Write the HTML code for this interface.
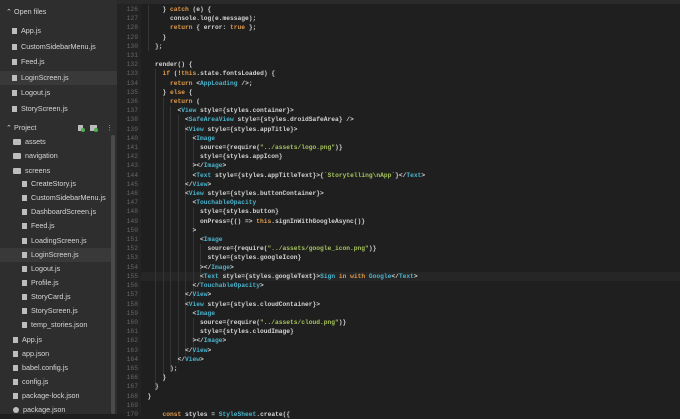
<!DOCTYPE html>
<html><head><meta charset="utf-8"><style>
*{margin:0;padding:0;box-sizing:border-box}
body{width:680px;height:414px;overflow:hidden;background:#1f1f1f;position:relative;font-family:"Liberation Sans",sans-serif}
#side{position:absolute;left:0;top:0;width:117px;height:414px;background:#2e2e2e}
.r{position:absolute;left:0;width:111px;height:14px;font-size:7.2px;color:#d6d6d6;line-height:14px;white-space:nowrap}
.r.sel{background:#393939}
.fi{display:inline-block;width:5px;height:6px;background:#bdbdbd;margin-right:4px;vertical-align:-1px}
.fo{display:inline-block;width:8px;height:6px;background:#bdbdbd;margin-right:4px;vertical-align:-1px;border-radius:1px}
.h{font-size:7.2px;color:#d6d6d6}
#sb{position:absolute;left:111px;top:135px;width:4px;height:279px;background:#4a4a4a;border-radius:2px}
#gut{position:absolute;left:117px;top:0;width:24px;height:414px;background:#232323}
#top{position:absolute;left:117px;top:0;width:563px;height:4px;background:#2a2a2a}
.n{position:absolute;left:117px;width:21px;text-align:right;font-family:"Liberation Mono",monospace;font-size:6.3px;color:#666;line-height:9.2px}
.c{position:absolute;left:147.5px;font-family:"Liberation Mono",monospace;font-size:6.25px;font-weight:bold;color:#d4d4d4;line-height:9.2px;white-space:pre}
.k{color:#e09a4a}.t{color:#4ab3cc}.s{color:#a5c25c}
#hl{position:absolute;left:141px;top:271.8px;width:539px;height:9.2px;background:#262626}
.g{position:absolute;width:1px;background:#353535}
</style></head><body>
<div id="side">
<div class="r" style="top:5px;padding-left:6px"><span class="h">⌃ Open files</span></div>
<div class="r" style="top:24px;padding-left:12px"><span class="fi"></span>App.js</div>
<div class="r" style="top:40px;padding-left:12px"><span class="fi"></span>CustomSidebarMenu.js</div>
<div class="r" style="top:55px;padding-left:12px"><span class="fi"></span>Feed.js</div>
<div class="r sel" style="top:71px;padding-left:12px;width:117px"><span class="fi"></span>LoginScreen.js</div>
<div class="r" style="top:86px;padding-left:12px"><span class="fi"></span>Logout.js</div>
<div class="r" style="top:102px;padding-left:12px"><span class="fi"></span>StoryScreen.js</div>
<div class="r" style="top:121px;padding-left:6px"><span class="h">⌃ Project</span>
<span style="position:absolute;left:78px;top:4px;width:5px;height:6px;background:#bbb"></span><span style="position:absolute;left:81px;top:7px;width:4px;height:4px;background:#4caf50;border-radius:2px"></span>
<span style="position:absolute;left:90px;top:4px;width:7px;height:6px;background:#bbb"></span><span style="position:absolute;left:94px;top:7px;width:4px;height:4px;background:#4caf50;border-radius:2px"></span>
<span style="position:absolute;left:106px;top:0;color:#aaa">⋮</span></div>
<div class="r" style="top:135px;padding-left:13px"><span class="fo"></span>assets</div>
<div class="r" style="top:149px;padding-left:13px"><span class="fo"></span>navigation</div>
<div class="r" style="top:164px;padding-left:13px"><span class="fo"></span>screens</div>
<div class="r" style="top:177px;padding-left:22px"><span class="fi"></span>CreateStory.js</div>
<div class="r" style="top:191px;padding-left:22px"><span class="fi"></span>CustomSidebarMenu.js</div>
<div class="r" style="top:205px;padding-left:22px"><span class="fi"></span>DashboardScreen.js</div>
<div class="r" style="top:219px;padding-left:22px"><span class="fi"></span>Feed.js</div>
<div class="r" style="top:234px;padding-left:22px"><span class="fi"></span>LoadingScreen.js</div>
<div class="r sel" style="top:248px;padding-left:22px"><span class="fi"></span>LoginScreen.js</div>
<div class="r" style="top:262px;padding-left:22px"><span class="fi"></span>Logout.js</div>
<div class="r" style="top:276px;padding-left:22px"><span class="fi"></span>Profile.js</div>
<div class="r" style="top:290px;padding-left:22px"><span class="fi"></span>StoryCard.js</div>
<div class="r" style="top:304px;padding-left:22px"><span class="fi"></span>StoryScreen.js</div>
<div class="r" style="top:318px;padding-left:22px"><span class="fi"></span>temp_stories.json</div>
<div class="r" style="top:333px;padding-left:13px"><span class="fi"></span>App.js</div>
<div class="r" style="top:347px;padding-left:13px"><span class="fi"></span>app.json</div>
<div class="r" style="top:361px;padding-left:13px"><span class="fi"></span>babel.config.js</div>
<div class="r" style="top:375px;padding-left:13px"><span class="fi"></span>config.js</div>
<div class="r" style="top:389px;padding-left:13px"><span class="fi"></span>package-lock.json</div>
<div class="r" style="top:403px;padding-left:13px"><span class="fi" style="border-radius:3px;width:6px"></span>package.json</div>
<div id="sb"></div>
</div>
<div id="gut"></div>
<div id="top"></div>
<div id="hl"></div>
<div class="g" style="left:147.5px;top:5px;height:46px"></div>
<div class="g" style="left:155px;top:69.4px;height:322px"></div>
<div class="g" style="left:162.5px;top:97px;height:285px"></div>
<div class="g" style="left:170px;top:106.2px;height:266px"></div>
<div class="g" style="left:177.5px;top:115.4px;height:248px"></div>
<div class="g" style="left:185px;top:124.6px;height:230px"></div>
<div class="g" style="left:192.5px;top:133.8px;height:37px"></div>
<div class="g" style="left:192.5px;top:207.4px;height:92px"></div>
<div class="g" style="left:192.5px;top:317.8px;height:37px"></div>
<div class="g" style="left:200px;top:244.2px;height:37px"></div>
<div class="n" style="top:5px">126<br>127<br>128<br>129<br>130<br>131<br>132<br>133<br>134<br>135<br>136<br>137<br>138<br>139<br>140<br>141<br>142<br>143<br>144<br>145<br>146<br>147<br>148<br>149<br>150<br>151<br>152<br>153<br>154<br>155<br>156<br>157<br>158<br>159<br>160<br>161<br>162<br>163<br>164<br>165<br>166<br>167<br>168<br>169<br>170</div>
<div class="c" style="top:5px">    } <span class="k">catch</span> (e) {
      console.log(e.message);
      <span class="k">return</span> { error: <span class="k">true</span> };
    }
  };

  render() {
    <span class="k">if</span> (!<span class="k">this</span>.state.fontsLoaded) {
      <span class="k">return</span> &lt;<span class="t">AppLoading</span> /&gt;;
    } <span class="k">else</span> {
      <span class="k">return</span> (
        &lt;<span class="t">View</span> style={styles.container}&gt;
          &lt;<span class="t">SafeAreaView</span> style={styles.droidSafeArea} /&gt;
          &lt;<span class="t">View</span> style={styles.appTitle}&gt;
            &lt;<span class="t">Image</span>
              source={require(<span class="s">"../assets/logo.png"</span>)}
              style={styles.appIcon}
            &gt;&lt;/<span class="t">Image</span>&gt;
            &lt;<span class="t">Text</span> style={styles.appTitleText}&gt;{<span class="s">`Storytelling\nApp`</span>}&lt;/<span class="t">Text</span>&gt;
          &lt;/<span class="t">View</span>&gt;
          &lt;<span class="t">View</span> style={styles.buttonContainer}&gt;
            &lt;<span class="t">TouchableOpacity</span>
              style={styles.button}
              onPress={() =&gt; <span class="k">this</span>.signInWithGoogleAsync()}
            &gt;
              &lt;<span class="t">Image</span>
                source={require(<span class="s">"../assets/google_icon.png"</span>)}
                style={styles.googleIcon}
              &gt;&lt;/<span class="t">Image</span>&gt;
              &lt;<span class="t">Text</span> style={styles.googleText}&gt;<span class="t">Sign</span> <span class="k">in with</span> <span class="t">Google</span>&lt;/<span class="t">Text</span>&gt;
            &lt;/<span class="t">TouchableOpacity</span>&gt;
          &lt;/<span class="t">View</span>&gt;
          &lt;<span class="t">View</span> style={styles.cloudContainer}&gt;
            &lt;<span class="t">Image</span>
              source={require(<span class="s">"../assets/cloud.png"</span>)}
              style={styles.cloudImage}
            &gt;&lt;/<span class="t">Image</span>&gt;
          &lt;/<span class="t">View</span>&gt;
        &lt;/<span class="t">View</span>&gt;
      );
    }
  }
}

    <span class="k">const</span> styles = <span class="t">StyleSheet</span>.create({</div>
</body></html>
